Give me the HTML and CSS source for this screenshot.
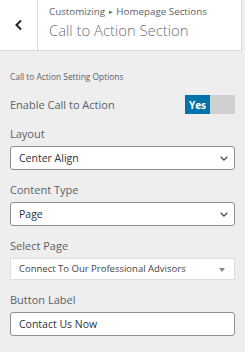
FILE: index.html
```html
<!DOCTYPE html>
<html>
<head>
<meta charset="utf-8">
<link rel="stylesheet" href="styles.css">
</head>
<body>
<div class="header">
  <div class="back">
    <svg width="10" height="12" viewBox="0 0 10 12"><polyline points="7,1.5 2.5,6 7,10.5" fill="none" stroke="#1d2327" stroke-width="2"/></svg>
  </div>
  <div class="titles">
    <div class="crumb">Customizing <span class="sep">▸</span> Homepage Sections</div>
    <div class="title">Call to Action Section</div>
  </div>
</div>
<div class="content">
  <div class="group-title">Call to Action Setting Options</div>
  <div class="toggle-row">
    <span class="label">Enable Call to Action</span>
    <div class="toggle"><span class="on">Yes</span><span class="off"></span></div>
  </div>
  <div class="field">
    <div class="label">Layout</div>
    <div class="select">Center Align
      <svg class="chev" width="8" height="5" viewBox="0 0 8 5"><polyline points="0.7,0.7 4,4 7.3,0.7" fill="none" stroke="#50575e" stroke-width="1.3"/></svg>
    </div>
  </div>
  <div class="field">
    <div class="label">Content Type</div>
    <div class="select">Page
      <svg class="chev" width="8" height="5" viewBox="0 0 8 5"><polyline points="0.7,0.7 4,4 7.3,0.7" fill="none" stroke="#50575e" stroke-width="1.3"/></svg>
    </div>
  </div>
  <div class="field">
    <div class="label">Select Page</div>
    <div class="select2">Connect To Our Professional Advisors
      <svg class="tri" width="6" height="4" viewBox="0 0 6 4"><polygon points="0,0 6,0 3,4" fill="#888"/></svg>
    </div>
  </div>
  <div class="field">
    <div class="label">Button Label</div>
    <div class="input">Contact Us Now</div>
  </div>
</div>
</body>
</html>
```
FILE: styles.css
```css
body {
  margin: 0;
  background: #eeeeee;
  font-family: "Open Sans", "Noto Sans", sans-serif;
  color: #5b6168;
}
.header {
  display: flex;
  width: 241px;
  height: 50px;
  background: #fff;
  border-right: 1px solid #dcdcde;
  border-bottom: 1px solid #dcdcde;
}
.back {
  width: 37px;
  border-right: 1px solid #dcdcde;
  display: flex;
  align-items: center;
  justify-content: center;
}
.titles {
  padding-left: 11px;
  padding-top: 5px;
}
.crumb {
  font-size: 9.8px;
  line-height: 14px;
  color: #5b6168;
}
.crumb .sep {
  font-size: 7px;
  vertical-align: 1px;
  margin: 0 1px;
}
.title {
  font-size: 14.8px;
  font-weight: 300;
  line-height: 22px;
  color: #6b7076;
}
.content {
  padding: 19px 10px 0 10px;
}
.group-title {
  font-size: 8.4px;
  line-height: 13px;
  color: #5b6168;
}
.toggle-row {
  display: flex;
  justify-content: space-between;
  align-items: center;
  margin-top: 12px;
  height: 19px;
  margin-bottom: 3px;
}
.label {
  font-size: 11px;
  line-height: 14px;
  color: #5b6168;
}
.toggle {
  display: flex;
  width: 50px;
  height: 19px;
}
.toggle .on {
  width: 25px;
  background: #0073aa;
  color: #fff;
  font-size: 10px;
  font-weight: 700;
  display: flex;
  align-items: center;
  justify-content: center;
}
.toggle .off {
  width: 25px;
  background: #d0d0d0;
}
.field {
  margin-top: 13px;
}
.field .label {
  margin-bottom: 5px;
}
.select, .input {
  position: relative;
  height: 22px;
  border: 1px solid #8c8f94;
  border-radius: 3px;
  background: #fff;
  font-size: 10.5px;
  line-height: 22px;
  padding-left: 8px;
  color: #2c3338;
}
.select2 {
  position: relative;
  height: 20px;
  border: 1px solid #ddd;
  background: #fff;
  font-size: 9.5px;
  line-height: 20px;
  padding-left: 8px;
  color: #444;
}
.chev {
  position: absolute;
  right: 6px;
  top: 9px;
}
.tri {
  position: absolute;
  right: 9px;
  top: 9px;
}
```
